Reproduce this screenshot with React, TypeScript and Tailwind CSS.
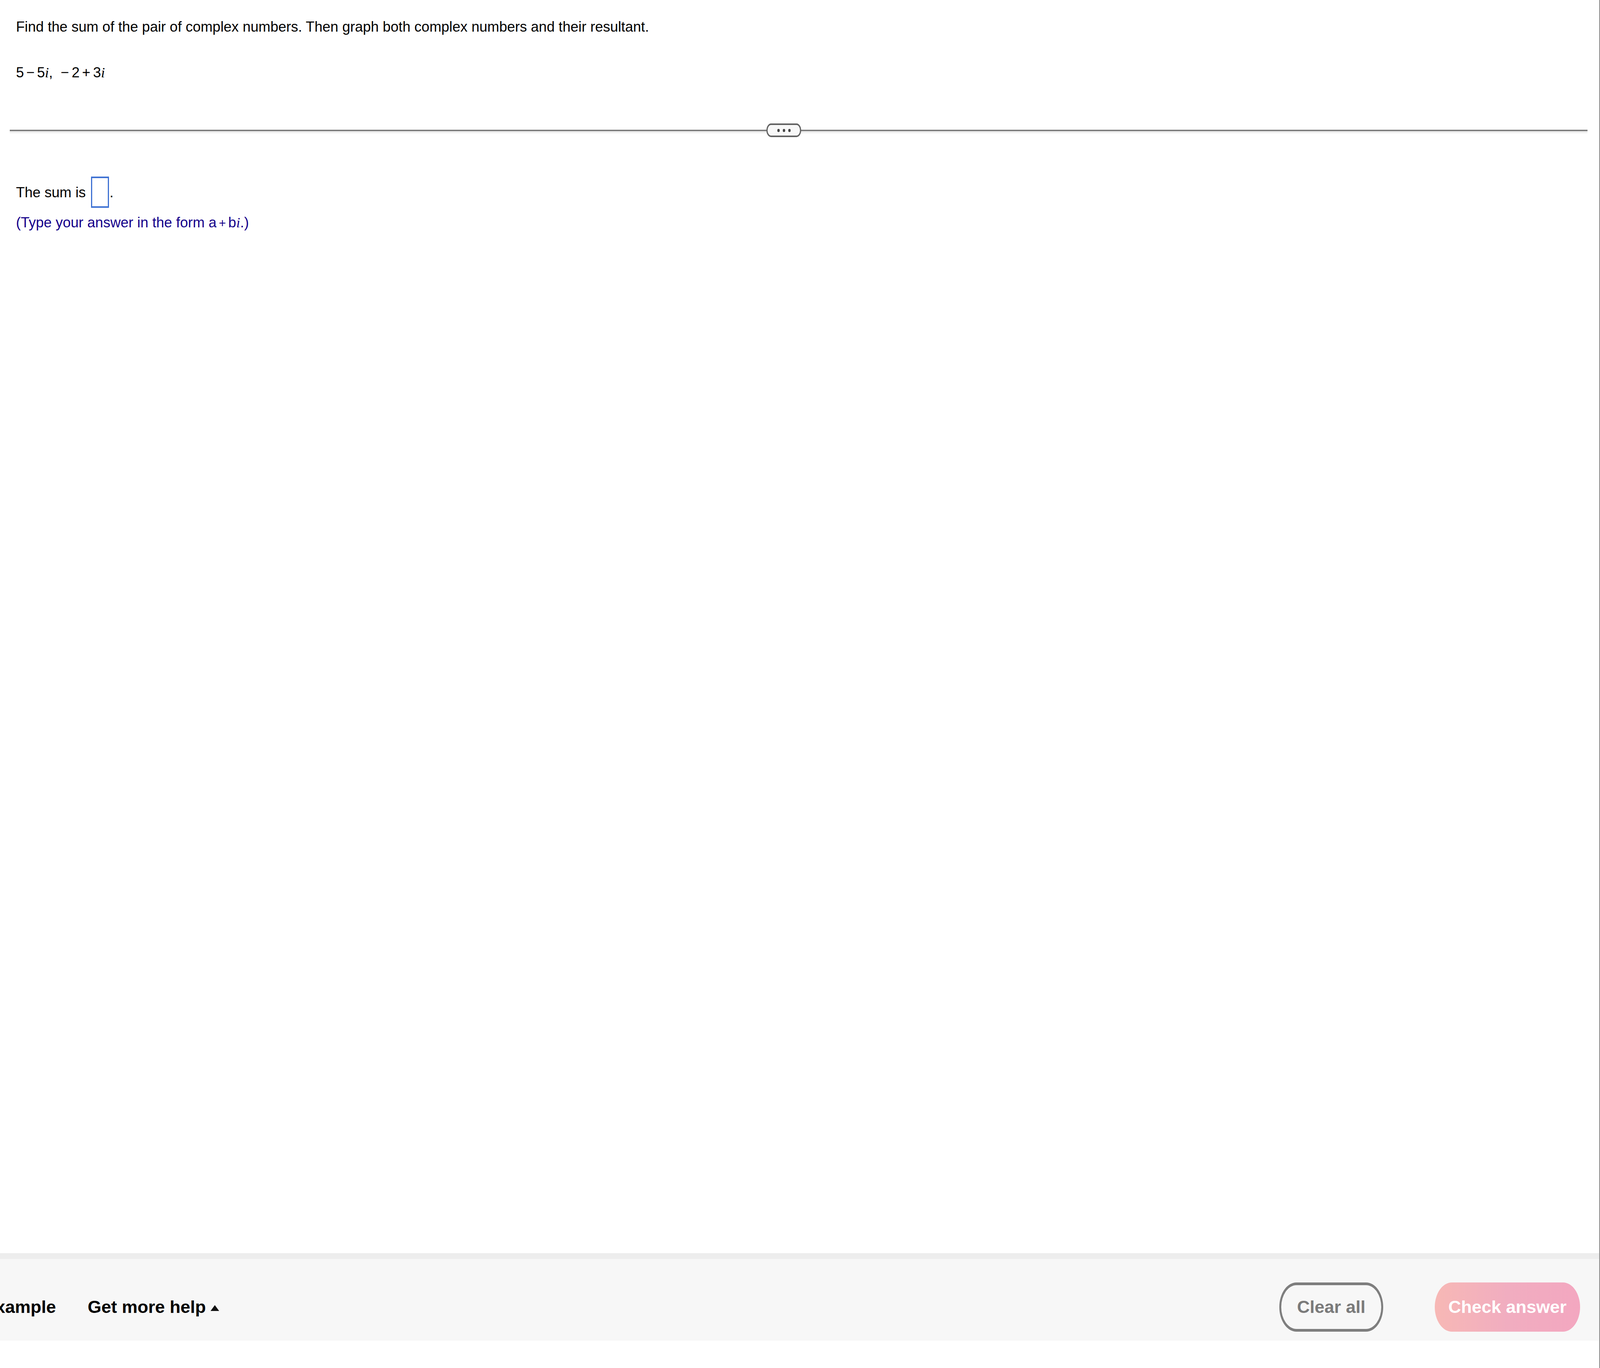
import React from "react";

const sans = "font-['Liberation_Sans',Arial,Helvetica,sans-serif]";
const mathI = "font-['Liberation_Serif','Times_New_Roman',serif] italic";

function Divider() {
  return (
    <div className="relative ml-[25px] mr-[30px] mt-[103px] flex h-[35px] items-center">
      <div className="h-[4px] w-full bg-[#808080] shadow-[0_5px_0_#efefef]" />
      <button
        type="button"
        className="absolute left-[1937px] top-0 flex h-[35px] w-[89px] items-center justify-center gap-[8px] rounded-[12px/17.5px] border-x-[3px] border-y-[4px] border-[#626262] bg-[#f8f8f8]"
      >
        <span className="h-[8px] w-[6px] rounded-full bg-[#444]" />
        <span className="h-[8px] w-[6px] rounded-full bg-[#444]" />
        <span className="h-[8px] w-[6px] rounded-full bg-[#444]" />
      </button>
    </div>
  );
}

function Question() {
  return (
    <div className="pl-[41px] pt-[41px] text-[36.5px] leading-[55px] text-black">
      <p>Find the sum of the pair of complex numbers. Then graph both complex numbers and their resultant.</p>
      <p className="mt-[62px] flex whitespace-pre">
        <span>5</span>
        <span className="ml-[6px]">−</span>
        <span className="ml-[6px]">5</span>
        <span className={mathI}>i</span>
        <span>,</span>
        <span className="ml-[20px]">−</span>
        <span className="ml-[7px]">2</span>
        <span className="ml-[6px]">+</span>
        <span className="ml-[7px]">3</span>
        <span className={mathI}>i</span>
      </p>
    </div>
  );
}

function Answer() {
  return (
    <div className="mt-[101px] pl-[41px] text-[36.5px] leading-[55px]">
      <div className="flex h-[80px] items-center text-black">
        <span>The sum is</span>
        <input
          aria-label="sum"
          className="ml-[13px] h-[80px] w-[46px] border-x-[3px] border-y-[4px] border-[#3f72d3] bg-white outline-none"
        />
        <span className="ml-[2px]">.</span>
      </div>
      <p className="mt-[10px] text-[#14008a]">
        (Type your answer in the form a<span className="mx-[6px] text-[31px]">+</span>b
        <span className={mathI}>i</span>.)
      </p>
    </div>
  );
}

function BottomBar() {
  return (
    <div>
      <div className="h-[15px] bg-[#ededed]" />
      <div className="flex h-[209px] items-start overflow-hidden bg-[#f7f7f7] pt-[60px] text-[45px] font-bold">
        <div className="flex h-[126px] shrink-0 items-center">
          <span className="ml-[-216px] whitespace-nowrap text-black">View an example</span>
          <span className="ml-[81px] flex items-center whitespace-nowrap text-black">
            Get more help
            <svg className="ml-[12px] mt-[4px]" width="22" height="15" viewBox="0 0 22 15">
              <polygon points="11,0 22,15 0,15" fill="#111" />
            </svg>
          </span>
        </div>
        <div className="ml-auto flex shrink-0 items-center gap-[132px] pr-[49px]">
          <button
            type="button"
            className="flex h-[126px] w-[266px] items-center justify-center rounded-[44px/63px] border-x-[5px] border-y-[7px] border-[#7e7e7e] text-[#7a7a7a]"
          >
            Clear all
          </button>
          <button
            type="button"
            className="flex h-[126px] w-[372px] items-center justify-center rounded-[44px/63px] bg-gradient-to-r from-[#f7b8b5] via-[#f1adc0] to-[#f3a7c0] text-white"
          >
            Check answer
          </button>
        </div>
      </div>
      <div className="h-[70px] bg-white" />
    </div>
  );
}

export default function App() {
  return (
    <div className={`flex h-screen w-full flex-col overflow-hidden border-r-[2px] border-[#8a8a8a] bg-white ${sans}`}>
      <div className="flex-1">
        <Question />
        <Divider />
        <Answer />
      </div>
      <BottomBar />
    </div>
  );
}
